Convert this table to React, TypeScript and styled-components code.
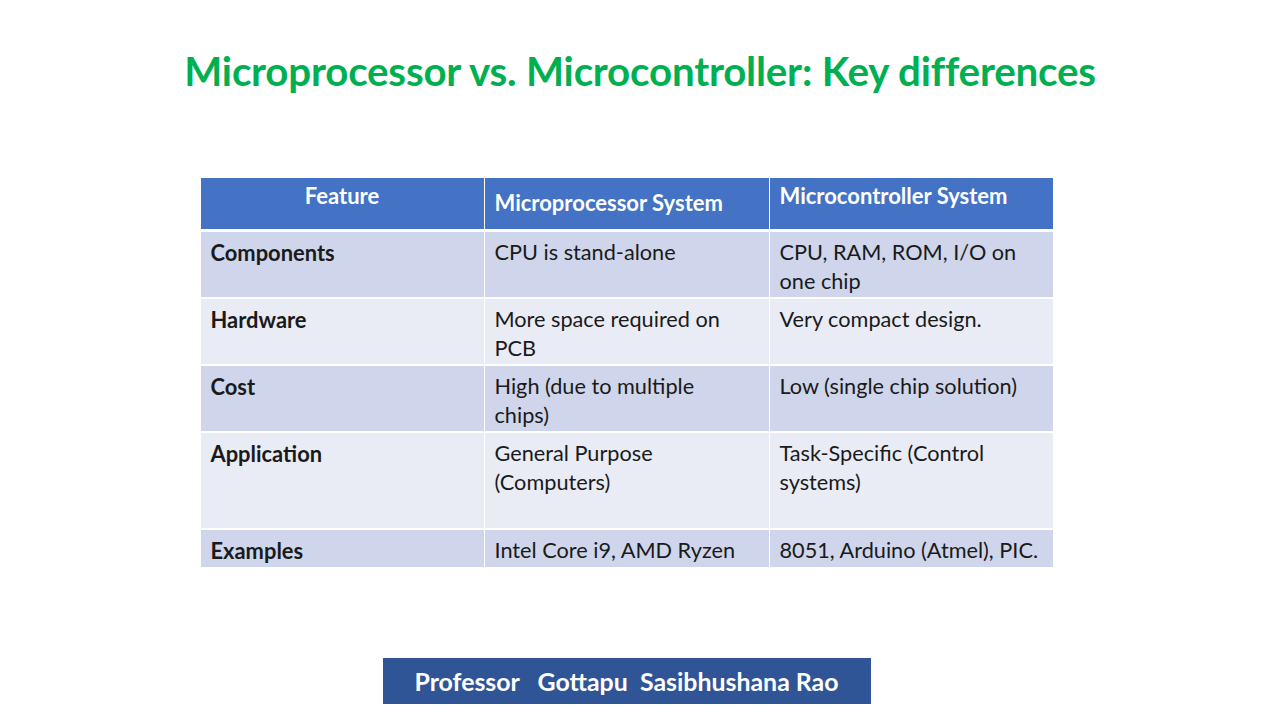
import React from "react";
import styled, { createGlobalStyle } from "styled-components";

const Global = createGlobalStyle`
  html, body { margin: 0; padding: 0; background: #ffffff; }
  body { font-family: Lato, "Open Sans", sans-serif; }
`;

const Slide = styled.div`
  width: 1280px;
  height: 720px;
  display: flex;
  flex-direction: column;
  align-items: center;
  background: #ffffff;
  overflow: hidden;
`;

const Title = styled.h1`
  margin: 45px 0 0 0;
  font-family: Lato, sans-serif;
  font-weight: 700;
  font-size: 40.3px;
  line-height: 52px;
  color: #00b050;
  letter-spacing: -0.2px;
`;

const Body = styled.div`
  display: flex;
  flex-direction: column;
  align-items: center;
  padding-right: 27px;
`;

const Table = styled.div`
  margin-top: 81px;
  width: 852px;
  display: grid;
  grid-template-columns: 283px 284px 283px;
  grid-template-rows: 52px 65px 65px 65px 95px 37px;
  column-gap: 1px;
  row-gap: 2px;
  background: #ffffff;
`;

const HeadCell = styled.div<{ $align: "center" | "left"; $valign: "start" | "end" }>`
  background: #4472c4;
  color: #ffffff;
  font-weight: 700;
  font-size: 22px;
  line-height: 26px;
  margin-bottom: 1px;
  padding-left: 10px;
  padding-right: 10px;
  display: flex;
  align-items: ${(p) => (p.$valign === "start" ? "flex-start" : "flex-end")};
  justify-content: ${(p) => (p.$align === "center" ? "center" : "flex-start")};
  padding-top: ${(p) => (p.$valign === "start" ? "5px" : "0")};
  padding-bottom: ${(p) => (p.$valign === "end" ? "13px" : "0")};
`;

const Cell = styled.div<{ $shade: boolean; $bold?: boolean }>`
  background: ${(p) => (p.$shade ? "#cfd5ea" : "#e9ebf5")};
  color: #1a1a1a;
  font-weight: ${(p) => (p.$bold ? 700 : 400)};
  font-size: ${(p) => (p.$bold ? "21.9px" : "21.7px")};
  line-height: 29px;
  padding: 6px 10px 0 10px;
  white-space: nowrap;
`;

const Line = styled.div`
  display: block;
`;

const Footer = styled.div`
  margin-top: 91px;
  width: 488px;
  height: 46px;
  background: #2f5597;
  color: #ffffff;
  font-family: Lato, sans-serif;
  font-weight: 700;
  font-size: 24.9px;
  display: flex;
  align-items: center;
  justify-content: center;
  white-space: pre;
`;

const rows: [string, string[], string[]][] = [
  ["Components", ["CPU is stand-alone"], ["CPU, RAM, ROM, I/O on", "one chip"]],
  ["Hardware", ["More space required on", "PCB"], ["Very compact design."]],
  ["Cost", ["High (due to multiple", "chips)"], ["Low (single chip solution)"]],
  ["Application", ["General Purpose", "(Computers)"], ["Task-Specific (Control", "systems)"]],
  ["Examples", ["Intel Core i9, AMD Ryzen"], ["8051, Arduino (Atmel), PIC."]],
];

export default function App() {
  return (
    <>
      <Global />
      <Slide>
        <Title>Microprocessor vs. Microcontroller: Key differences</Title>
        <Body>
          <Table>
            <HeadCell $align="center" $valign="start">Feature</HeadCell>
            <HeadCell $align="left" $valign="end">Microprocessor System</HeadCell>
            <HeadCell $align="left" $valign="start">Microcontroller System</HeadCell>
            {rows.map((r, i) => (
              <React.Fragment key={r[0]}>
                <Cell $shade={i % 2 === 0} $bold>{r[0]}</Cell>
                <Cell $shade={i % 2 === 0}>
                  {r[1].map((l) => (
                    <Line key={l}>{l}</Line>
                  ))}
                </Cell>
                <Cell $shade={i % 2 === 0}>
                  {r[2].map((l) => (
                    <Line key={l}>{l}</Line>
                  ))}
                </Cell>
              </React.Fragment>
            ))}
          </Table>
          <Footer>{"Professor   Gottapu  Sasibhushana Rao"}</Footer>
        </Body>
      </Slide>
    </>
  );
}
